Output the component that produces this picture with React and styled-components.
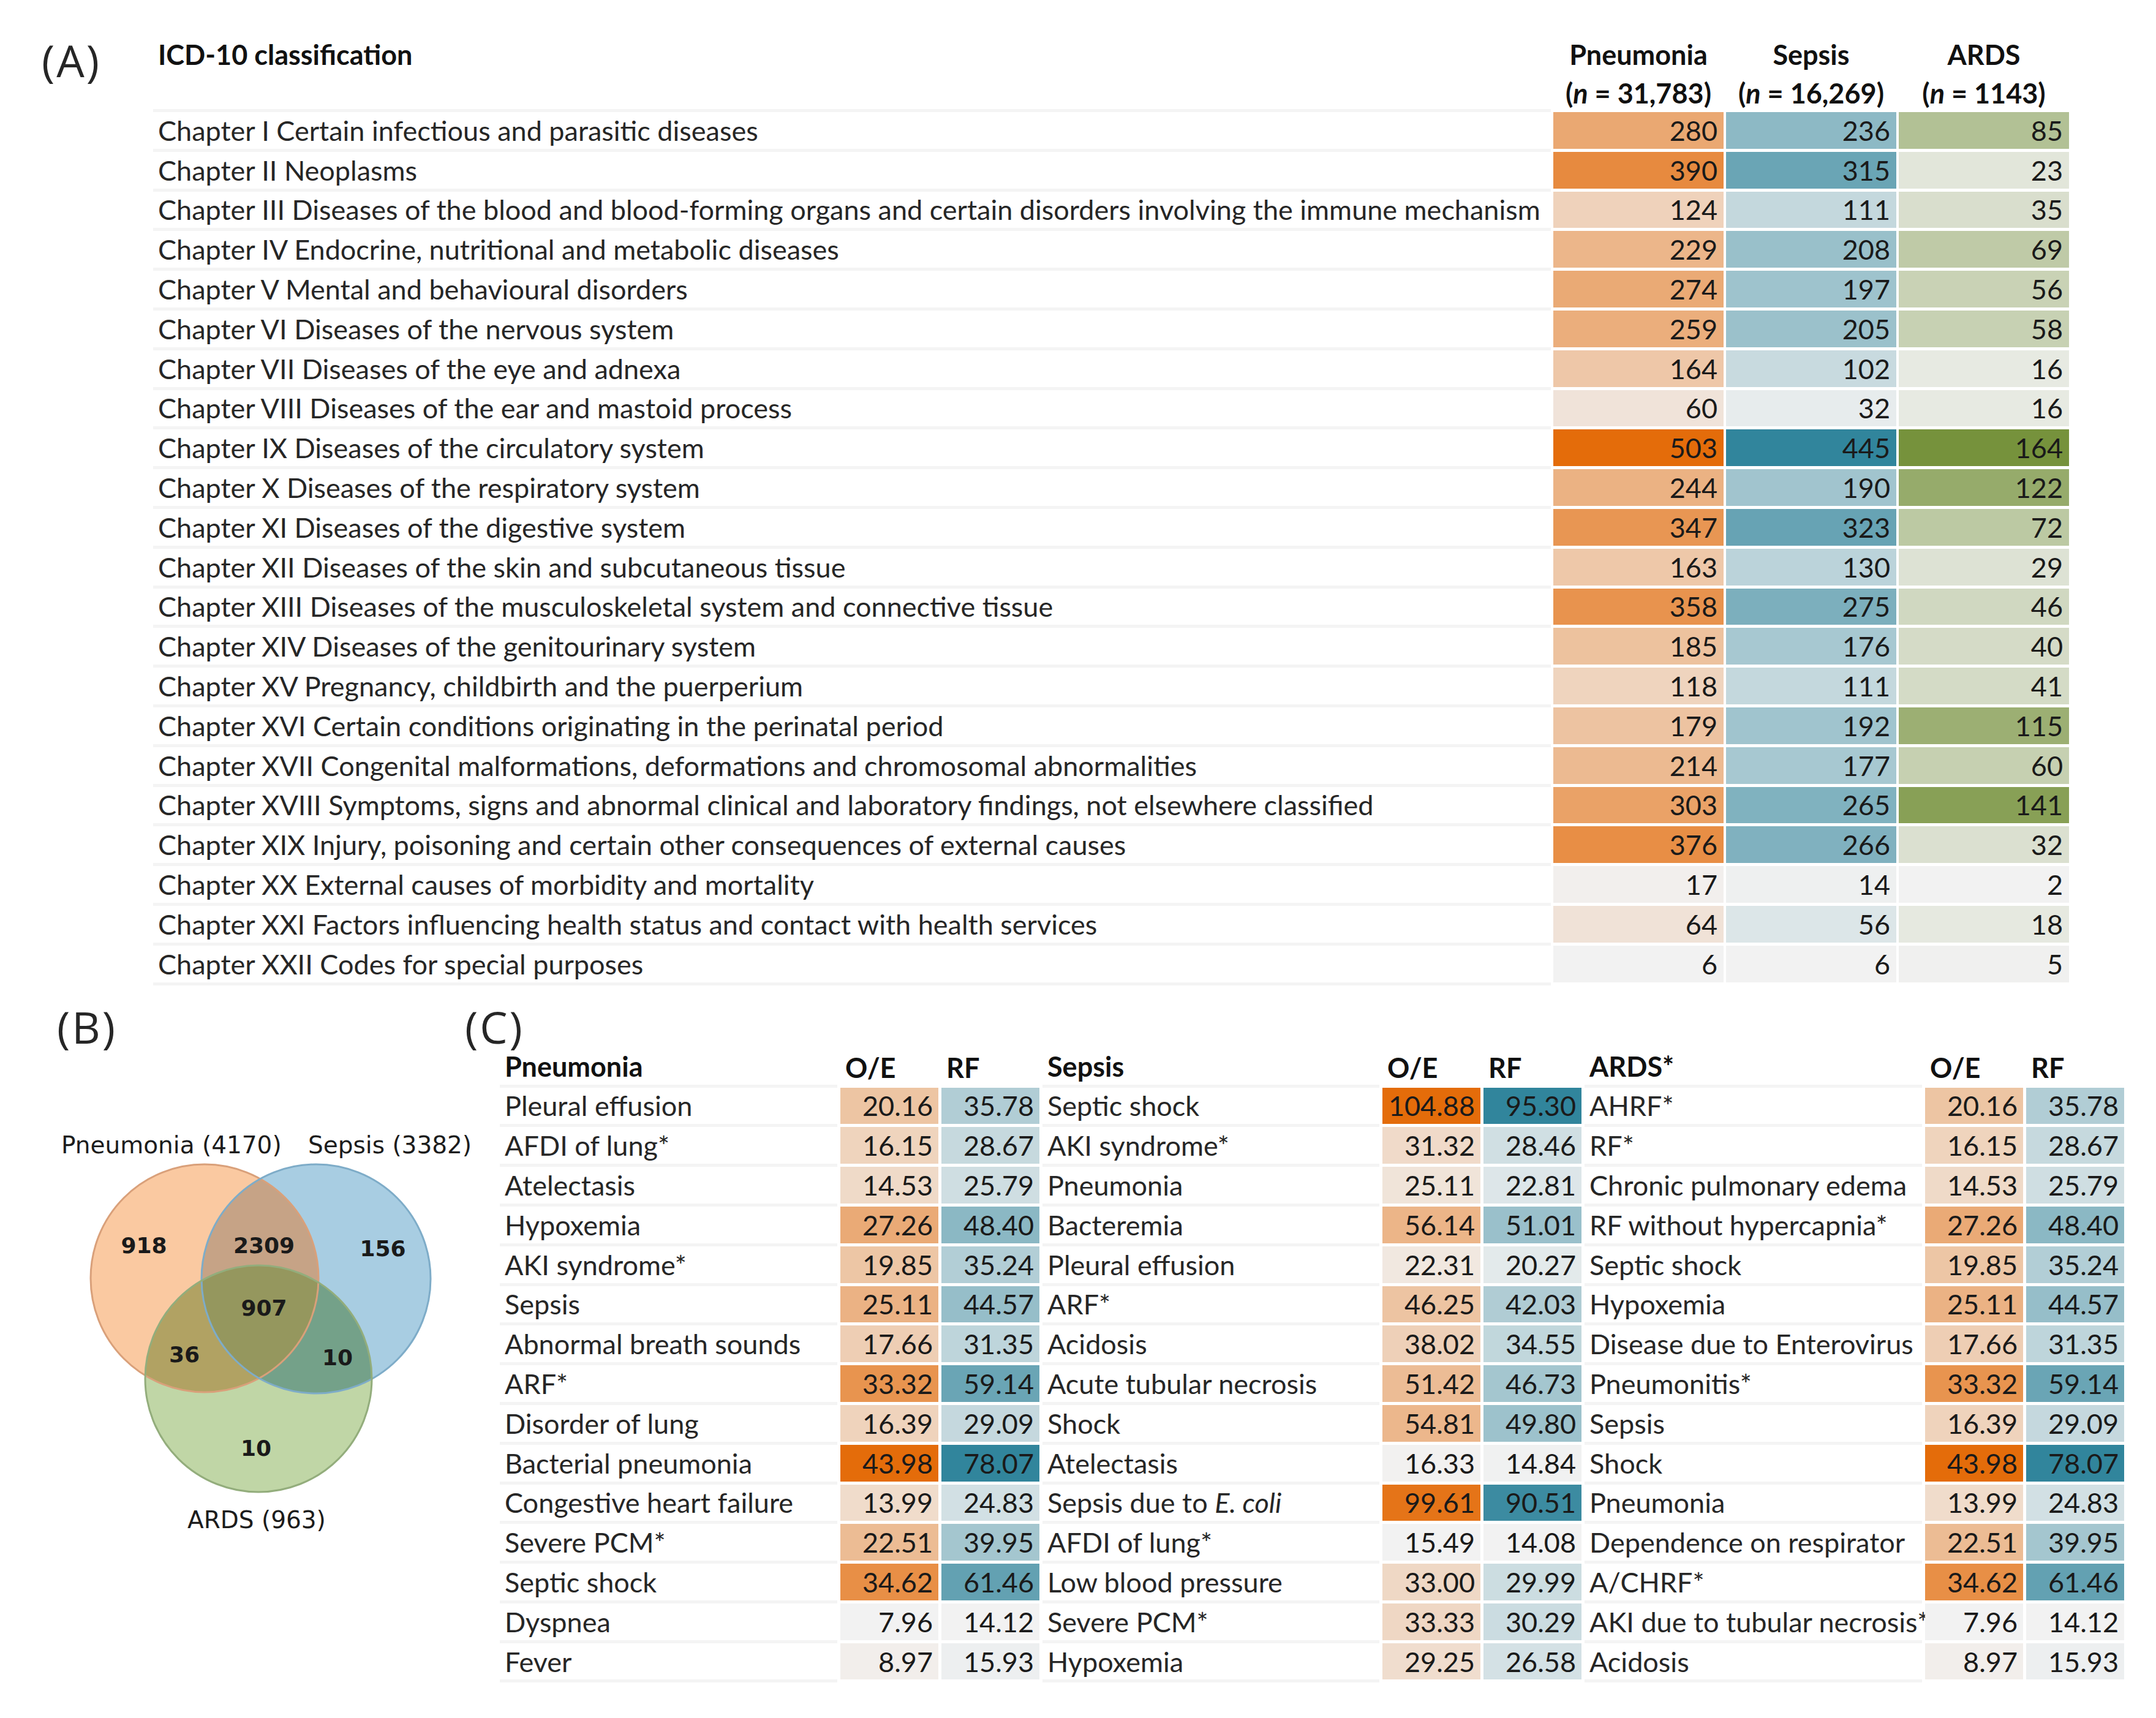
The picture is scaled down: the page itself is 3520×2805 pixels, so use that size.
import React from 'react';
import styled, { createGlobalStyle } from 'styled-components';

const GlobalStyle = createGlobalStyle`
  html, body { margin: 0; padding: 0; background: #ffffff; }
  body { font-family: Lato, "Liberation Sans", sans-serif; color: #222222; }
  * { box-sizing: border-box; }
`;

const LO = [242, 242, 242];
const ORANGE = [228, 108, 10];
const TEAL = [49, 133, 156];
const GREEN = [118, 146, 60];

function scaleColor(v, min, max, hi) {
  const t = (v - min) / (max - min);
  const c = LO.map((l, i) => Math.round(l + (hi[i] - l) * t));
  return `rgb(${c.join(',')})`;
}

const chapters = [
  ['Chapter I Certain infectious and parasitic diseases', 280, 236, 85],
  ['Chapter II Neoplasms', 390, 315, 23],
  ['Chapter III Diseases of the blood and blood-forming organs and certain disorders involving the immune mechanism', 124, 111, 35],
  ['Chapter IV Endocrine, nutritional and metabolic diseases', 229, 208, 69],
  ['Chapter V Mental and behavioural disorders', 274, 197, 56],
  ['Chapter VI Diseases of the nervous system', 259, 205, 58],
  ['Chapter VII Diseases of the eye and adnexa', 164, 102, 16],
  ['Chapter VIII Diseases of the ear and mastoid process', 60, 32, 16],
  ['Chapter IX Diseases of the circulatory system', 503, 445, 164],
  ['Chapter X Diseases of the respiratory system', 244, 190, 122],
  ['Chapter XI Diseases of the digestive system', 347, 323, 72],
  ['Chapter XII Diseases of the skin and subcutaneous tissue', 163, 130, 29],
  ['Chapter XIII Diseases of the musculoskeletal system and connective tissue', 358, 275, 46],
  ['Chapter XIV Diseases of the genitourinary system', 185, 176, 40],
  ['Chapter XV Pregnancy, childbirth and the puerperium', 118, 111, 41],
  ['Chapter XVI Certain conditions originating in the perinatal period', 179, 192, 115],
  ['Chapter XVII Congenital malformations, deformations and chromosomal abnormalities', 214, 177, 60],
  ['Chapter XVIII Symptoms, signs and abnormal clinical and laboratory findings, not elsewhere classified', 303, 265, 141],
  ['Chapter XIX Injury, poisoning and certain other consequences of external causes', 376, 266, 32],
  ['Chapter XX External causes of morbidity and mortality', 17, 14, 2],
  ['Chapter XXI Factors influencing health status and contact with health services', 64, 56, 18],
  ['Chapter XXII Codes for special purposes', 6, 6, 5],
];

const pairs = [
  [['Pleural effusion', '20.16', '35.78'], ['Septic shock', '104.88', '95.30'], ['AHRF*', '20.16', '35.78']],
  [['AFDI of lung*', '16.15', '28.67'], ['AKI syndrome*', '31.32', '28.46'], ['RF*', '16.15', '28.67']],
  [['Atelectasis', '14.53', '25.79'], ['Pneumonia', '25.11', '22.81'], ['Chronic pulmonary edema', '14.53', '25.79']],
  [['Hypoxemia', '27.26', '48.40'], ['Bacteremia', '56.14', '51.01'], ['RF without hypercapnia*', '27.26', '48.40']],
  [['AKI syndrome*', '19.85', '35.24'], ['Pleural effusion', '22.31', '20.27'], ['Septic shock', '19.85', '35.24']],
  [['Sepsis', '25.11', '44.57'], ['ARF*', '46.25', '42.03'], ['Hypoxemia', '25.11', '44.57']],
  [['Abnormal breath sounds', '17.66', '31.35'], ['Acidosis', '38.02', '34.55'], ['Disease due to Enterovirus', '17.66', '31.35']],
  [['ARF*', '33.32', '59.14'], ['Acute tubular necrosis', '51.42', '46.73'], ['Pneumonitis*', '33.32', '59.14']],
  [['Disorder of lung', '16.39', '29.09'], ['Shock', '54.81', '49.80'], ['Sepsis', '16.39', '29.09']],
  [['Bacterial pneumonia', '43.98', '78.07'], ['Atelectasis', '16.33', '14.84'], ['Shock', '43.98', '78.07']],
  [['Congestive heart failure', '13.99', '24.83'], ['ECOLI', '99.61', '90.51'], ['Pneumonia', '13.99', '24.83']],
  [['Severe PCM*', '22.51', '39.95'], ['AFDI of lung*', '15.49', '14.08'], ['Dependence on respirator', '22.51', '39.95']],
  [['Septic shock', '34.62', '61.46'], ['Low blood pressure', '33.00', '29.99'], ['A/CHRF*', '34.62', '61.46']],
  [['Dyspnea', '7.96', '14.12'], ['Severe PCM*', '33.33', '30.29'], ['AKI due to tubular necrosis*', '7.96', '14.12']],
  [['Fever', '8.97', '15.93'], ['Hypoxemia', '29.25', '26.58'], ['Acidosis', '8.97', '15.93']],
];

function colRange(g, k) {
  const vals = pairs.map((r) => parseFloat(r[g][k]));
  return [Math.min(...vals), Math.max(...vals)];
}
const rangesC = [0, 1, 2].map((g) => [colRange(g, 1), colRange(g, 2)]);

const Page = styled.div`
  width: 3520px;
  height: 2805px;
  overflow: hidden;
  padding-top: 57px;
  display: flex;
  flex-direction: column;
`;

const SectionA = styled.section`
  display: flex;
  align-items: flex-start;
`;

const PanelLabel = styled.div`
  font-family: "Open Sans", "DejaVu Sans", sans-serif;
  font-size: 72px;
  letter-spacing: 3px;
  line-height: 70px;
  height: 70px;
  color: #262626;
  margin-left: ${(p) => p.$left}px;
  margin-top: ${(p) => p.$top}px;
  width: ${(p) => (p.$width ? `${p.$width}px` : 'auto')};
  flex: none;
`;

const TableA = styled.div`
  display: flex;
  flex-direction: column;
`;

const RowA = styled.div`
  display: grid;
  grid-template-columns: 2282px 278px 278px 278px;
  column-gap: 4px;
  height: ${(p) => (p.$head ? '63px' : '64.8px')};
`;

const HeadLabel = styled.div`
  font-weight: 700;
  font-size: 45px;
  color: #111;
  padding-left: 8px;
  display: flex;
  align-items: center;
  border-bottom: ${(p) => (p.$rule ? '5px solid #f4f4f4' : 'none')};
`;

const HeadCol = styled.div`
  font-weight: 700;
  font-size: 45px;
  color: #111;
  display: flex;
  align-items: center;
  justify-content: center;
  white-space: nowrap;
`;

const LabelCell = styled.div`
  font-size: 45px;
  color: #262626;
  padding-left: 8px;
  display: flex;
  align-items: center;
  white-space: nowrap;
  border-bottom: 5.8px solid #f4f4f4;
`;

const NumCell = styled.div`
  font-size: 45px;
  color: #1a1a1a;
  background: ${(p) => p.$bg};
  border-bottom: 5.8px solid #ffffff;
  display: flex;
  align-items: center;
  justify-content: flex-end;
  padding-right: ${(p) => p.$pad || 10}px;
  white-space: nowrap;
`;

const Bottom = styled.section`
  display: flex;
  align-items: flex-start;
  margin-top: 31px;
`;

const BPanel = styled.div`
  width: 754px;
  flex: none;
  display: flex;
  flex-direction: column;
`;

const VennSvg = styled.svg`
  display: block;
  margin-top: 89px;
  overflow: visible;
`;

const CPanel = styled.div`
  display: flex;
  flex-direction: column;
`;

const TableC = styled.div`
  display: flex;
  flex-direction: column;
  margin-left: 62px;
`;

const RowC = styled.div`
  display: grid;
  grid-template-columns: 551px 160px 160px 550px 160px 160px 551px 160px 160px;
  column-gap: 5px;
  height: ${(p) => (p.$head ? '65px' : '64.8px')};
`;

const HeadC = styled.div`
  font-weight: 700;
  font-size: 45px;
  color: #111;
  padding-left: 8px;
  display: flex;
  align-items: center;
  border-bottom: ${(p) => (p.$rule ? '5px solid #f4f4f4' : 'none')};
`;

const N = styled.i`
  font-style: italic;
`;

const VennLabel = styled.text`
  font-family: "DejaVu Sans", Verdana, sans-serif;
  font-size: 39px;
  fill: #1c1c1c;
`;

const VennNum = styled.text`
  font-family: "DejaVu Sans", Verdana, sans-serif;
  font-size: 36px;
  font-weight: 700;
  fill: #1a1a1a;
  text-anchor: middle;
`;

const P = { cx: 334, cy: 2087, r: 186 };
const S = { cx: 516, cy: 2088, r: 187 };
const A = { cx: 422, cy: 2251, r: 185 };

function Venn() {
  return (
    <VennSvg width="754" height="720" viewBox="0 1800 754 720">
      <defs>
        <clipPath id="clipP"><circle {...P} /></clipPath>
        <clipPath id="clipS"><circle {...S} /></clipPath>
      </defs>
      <circle {...P} fill="#fac9a1" />
      <circle {...S} fill="#a8cde2" />
      <circle {...A} fill="#c0d6a6" />
      <g clipPath="url(#clipP)"><circle {...S} fill="#c6a386" /></g>
      <g clipPath="url(#clipP)"><circle {...A} fill="#b1a263" /></g>
      <g clipPath="url(#clipS)"><circle {...A} fill="#74a189" /></g>
      <g clipPath="url(#clipP)"><g clipPath="url(#clipS)"><circle {...A} fill="#95975e" /></g></g>
      <circle {...P} fill="none" stroke="#d9a07a" strokeWidth="3" />
      <circle {...S} fill="none" stroke="#7eacc8" strokeWidth="3" />
      <circle {...A} fill="none" stroke="#93ad7c" strokeWidth="3" />
      <VennLabel x="100" y="1883">Pneumonia (4170)</VennLabel>
      <VennLabel x="503" y="1883">Sepsis (3382)</VennLabel>
      <VennLabel x="306" y="2495">ARDS (963)</VennLabel>
      <VennNum x="235" y="2046">918</VennNum>
      <VennNum x="431" y="2046">2309</VennNum>
      <VennNum x="625" y="2051">156</VennNum>
      <VennNum x="431" y="2148">907</VennNum>
      <VennNum x="301" y="2224">36</VennNum>
      <VennNum x="551" y="2229">10</VennNum>
      <VennNum x="418" y="2377">10</VennNum>
    </VennSvg>
  );
}

function renderLabel(text) {
  if (text === 'ECOLI') {
    return (
      <>
        Sepsis due to&nbsp;<i>E. coli</i>
      </>
    );
  }
  return text;
}

export default function App() {
  return (
    <>
      <GlobalStyle />
      <Page>
        <SectionA>
          <PanelLabel $left={68} $top={6} $width={182}>(A)</PanelLabel>
          <TableA>
            <RowA $head>
              <HeadLabel>ICD-10 classification</HeadLabel>
              <HeadCol>Pneumonia</HeadCol>
              <HeadCol>Sepsis</HeadCol>
              <HeadCol>ARDS</HeadCol>
            </RowA>
            <RowA $head>
              <HeadLabel $rule />
              <HeadCol>(<N>n</N>&nbsp;= 31,783)</HeadCol>
              <HeadCol>(<N>n</N>&nbsp;= 16,269)</HeadCol>
              <HeadCol>(<N>n</N>&nbsp;= 1143)</HeadCol>
            </RowA>
            {chapters.map(([label, p, s, a]) => (
              <RowA key={label}>
                <LabelCell>{label}</LabelCell>
                <NumCell $bg={scaleColor(p, 6, 503, ORANGE)}>{p}</NumCell>
                <NumCell $bg={scaleColor(s, 6, 445, TEAL)}>{s}</NumCell>
                <NumCell $bg={scaleColor(a, 2, 164, GREEN)}>{a}</NumCell>
              </RowA>
            ))}
          </TableA>
        </SectionA>
        <Bottom>
          <BPanel>
            <PanelLabel $left={93} $top={1}>(B)</PanelLabel>
            <Venn />
          </BPanel>
          <CPanel>
            <PanelLabel $left={5} $top={1}>(C)</PanelLabel>
            <TableC>
              <RowC $head>
                <HeadC $rule>Pneumonia</HeadC>
                <HeadC>O/E</HeadC>
                <HeadC>RF</HeadC>
                <HeadC $rule>Sepsis</HeadC>
                <HeadC>O/E</HeadC>
                <HeadC>RF</HeadC>
                <HeadC $rule>ARDS*</HeadC>
                <HeadC>O/E</HeadC>
                <HeadC>RF</HeadC>
              </RowC>
              {pairs.map((row, i) => (
                <RowC key={i}>
                  {row.map((cell, g) => (
                    <React.Fragment key={g}>
                      <LabelCell>{renderLabel(cell[0])}</LabelCell>
                      <NumCell $pad={9} $bg={scaleColor(parseFloat(cell[1]), rangesC[g][0][0], rangesC[g][0][1], ORANGE)}>{cell[1]}</NumCell>
                      <NumCell $pad={9} $bg={scaleColor(parseFloat(cell[2]), rangesC[g][1][0], rangesC[g][1][1], TEAL)}>{cell[2]}</NumCell>
                    </React.Fragment>
                  ))}
                </RowC>
              ))}
            </TableC>
          </CPanel>
        </Bottom>
      </Page>
    </>
  );
}
